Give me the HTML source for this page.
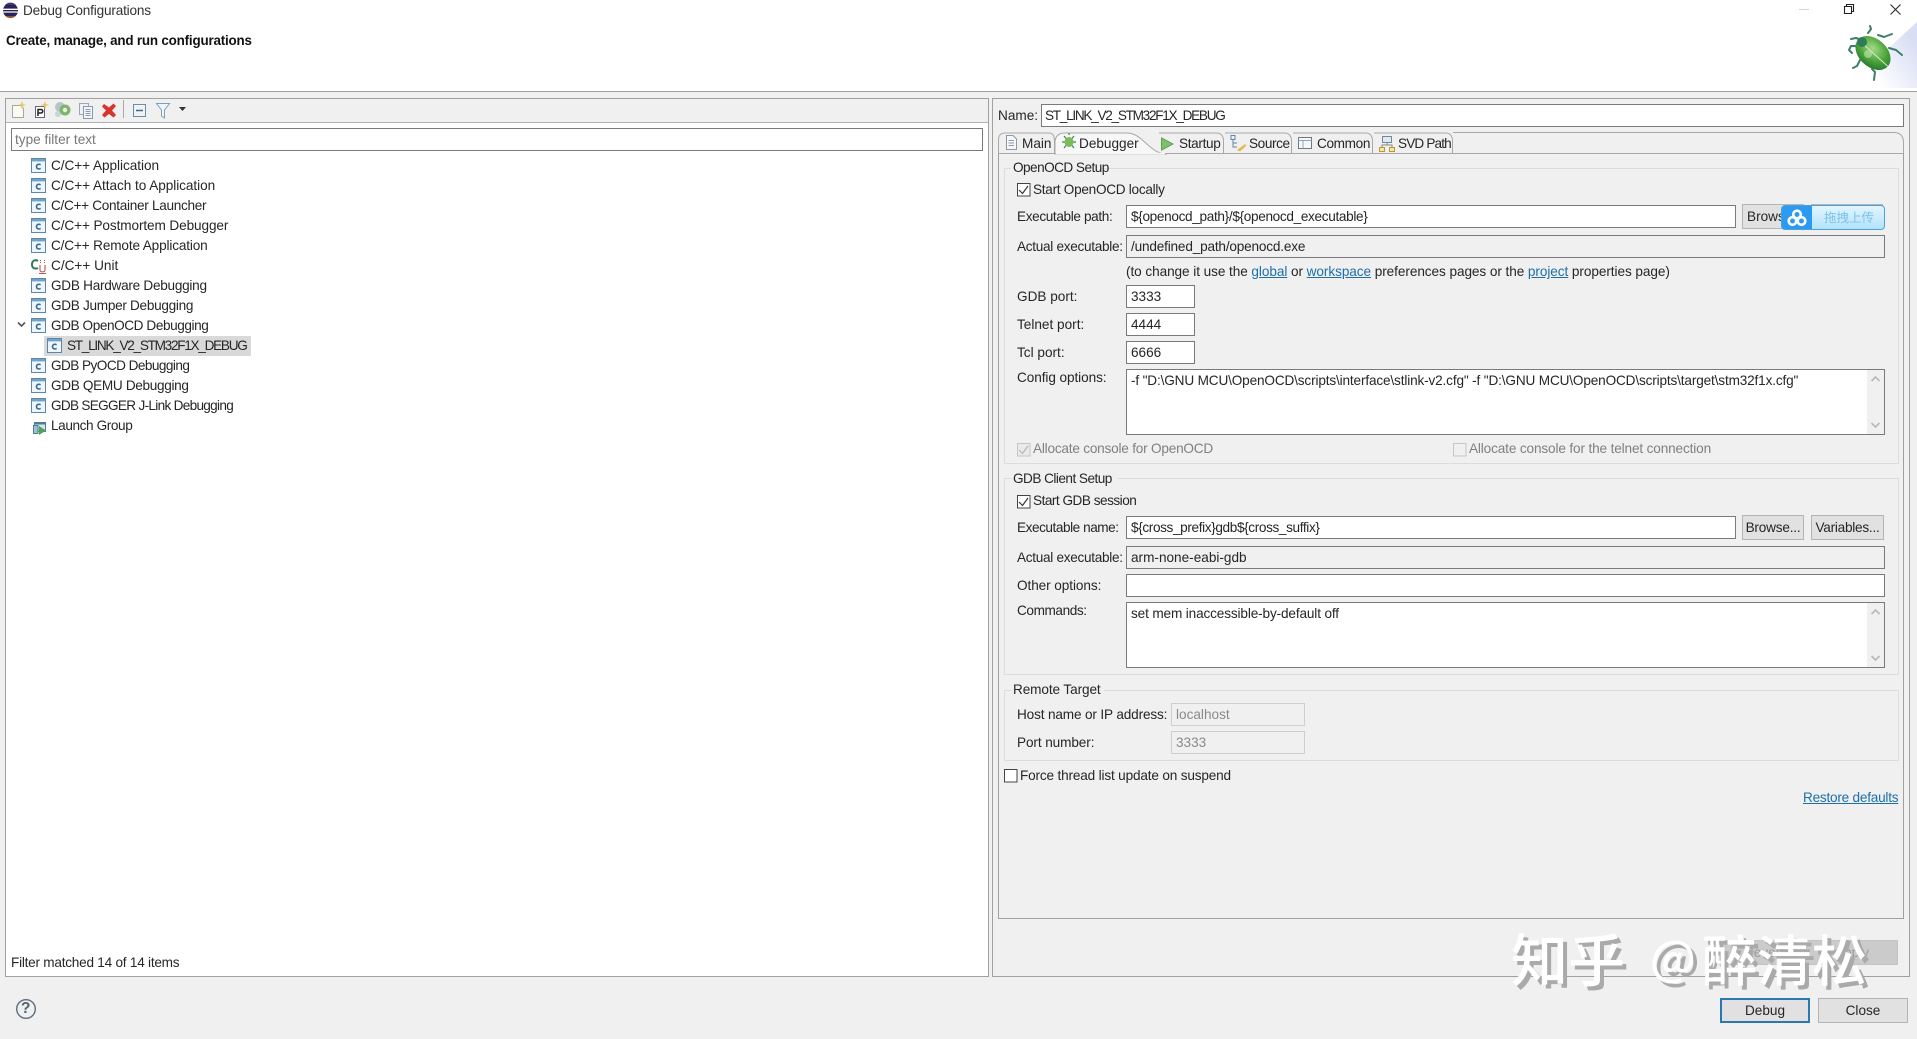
<!DOCTYPE html>
<html lang="en"><head><meta charset="utf-8"><title>Debug Configurations</title>
<style>
html,body{margin:0;padding:0;width:1917px;height:1039px;overflow:hidden;background:#f0f0f0}
body{position:relative;font:13.6px/20px "Liberation Sans","Noto Sans CJK SC",sans-serif;color:#262626}
.t{position:absolute;height:20px;line-height:20px;white-space:nowrap}
.b{position:absolute;box-sizing:border-box}
.i{position:absolute;box-sizing:border-box;border:1px solid #7a7a7a;background:#fff;padding-left:4px;padding-top:1px;line-height:20px;white-space:nowrap;overflow:hidden;height:23px}
.ro{background:#f0f0f0}
.dis{border-color:#cfcfcf;background:#f0f0f0;color:#8a8a8a}
.btn{position:absolute;box-sizing:border-box;border:1px solid #b4b4b4;background:#e1e1e1;text-align:center;line-height:23px;height:25px}
.g{color:#808080}
a{color:#1c6fa8;text-decoration:underline}
svg{position:absolute;left:0;top:0}
.w{font-family:'Noto Sans CJK SC',sans-serif;font-weight:500;color:#fff;text-shadow:4px 4px 0 #aaa;height:62px;line-height:62px}
</style></head><body>
<div class="b" style="left:0;top:0;width:1917px;height:92px;background:#fff;border-bottom:1px solid #a0a0a0"></div>
<div class="b" style="left:5px;top:98px;width:984px;height:879px;border:1px solid #a0a0a0;background:#fff"></div>
<div class="b" style="left:6px;top:99px;width:982px;height:24px;background:#f0f0f0;border-bottom:1px solid #b0b0b0"></div>
<div class="b" style="left:992px;top:98px;width:918px;height:879px;border:1px solid #a0a0a0"></div>
<div class="b" style="left:998px;top:153px;width:906px;height:766px;border:1px solid #a0a0a0;border-top:1px solid #a8a8a8"></div>
<div class="b" style="left:44px;top:336px;width:207px;height:20px;background:#d9d9d9"></div>

<svg width="1917" height="1039" viewBox="0 0 1917 1039">
<defs>
<linearGradient id="cg" x1="0" y1="1" x2="1" y2="0.35"><stop offset=".35" stop-color="#fff"/><stop offset="1" stop-color="#d8def4"/></linearGradient>
<radialGradient id="bg" cx=".42" cy=".38" r=".7"><stop offset="0" stop-color="#a5d98a"/><stop offset=".55" stop-color="#4ea63c"/><stop offset="1" stop-color="#23702c"/></radialGradient>
<symbol id="c" viewBox="0 0 15 15" overflow="visible">
<rect x=".5" y=".5" width="14" height="14" fill="#eef5fb" stroke="#5f87a3"/>
<rect x="1" y="1" width="13" height="2.4" fill="#6fa4c8"/>
<path d="M9.6 6.8C8.2 5.7 5.5 6.2 5.5 8.6S8.2 11.5 9.6 10.4" fill="none" stroke="#2f6a92" stroke-width="1.5"/>
</symbol>
<symbol id="box" viewBox="0 0 14 14"><rect x=".5" y=".5" width="12.5" height="12.5" fill="#fff" stroke="#444"/></symbol>
</defs>
<path d="M1917 22V88H1845Z" fill="url(#cg)"/>
<circle cx="10.5" cy="10.5" r="7.5" fill="#2c2255"/>
<path d="M3 8.6H18V10H3ZM3 11.4H18V12.6H3Z" fill="#fff"/>
<path d="M5 5A7.5 7.5 0 0 1 16 5Z" fill="#3f3578"/><path d="M5 16A7.5 7.5 0 0 0 16 16Z" fill="#e08a2e" opacity=".5"/>
<path d="M1799 9.5H1809" stroke="#d4d4d4"/>
<path d="M1844.5 6.5H1851.5V13.5H1844.5ZM1846.5 6.5V4.5H1853.5V11.5H1851.5" fill="none" stroke="#222" stroke-width="1.1"/>
<path d="M1890.5 4.5L1900.5 14.5M1900.5 4.5L1890.5 14.5" stroke="#222" stroke-width="1"/>
<!-- beetle -->
<g fill="none" stroke="#3f7f6a" stroke-width="2" stroke-linecap="round" stroke-linejoin="round">
<path d="M1862 40L1856 38L1851 39"/><path d="M1858 46L1851 46L1849 50L1852 53"/><path d="M1860 60L1857 66L1853 68"/>
<path d="M1868 33L1871 29L1870 26"/><path d="M1878 35L1884 37L1892 34"/><path d="M1889 48L1896 50L1902 55"/>
<path d="M1872 69L1875 72L1874 80"/><path d="M1882 66L1887 62"/>
</g>
<g transform="rotate(42 1873 53)"><ellipse cx="1873" cy="53" rx="20" ry="14" fill="url(#bg)"/><path d="M1860 53H1893" stroke="#d4efc4" stroke-width="1"/></g>
<circle cx="1868" cy="54" r="4" fill="#bfe6aa" opacity=".6"/>
<circle cx="1862" cy="42" r="5" fill="#2f7d58"/>
<!-- toolbar icons -->
<g transform="translate(-1,-1)">
<path d="M13.5 106.5H21.5L24.5 109.5V118.5H13.5Z" fill="#fbfbf3" stroke="#a8a8a0"/>
<path d="M23 102L24 105L27 106L24 107L23 110L22 107L19 106L22 105Z" fill="#e8c958"/>
<path d="M36.5 107.5H45.5V118.5H36.5Z" fill="#fff" stroke="#667"/>
<path d="M46 102L47 105L50 106L47 107L46 110L45 107L42 106L45 105Z" fill="#e8c958"/>
<path d="M39 117V110.5H42A1.7 1.7 0 0 1 42 114H39" fill="none" stroke="#222" stroke-width="1.5"/>
<circle cx="61" cy="108" r="5" fill="#b7c3cc"/><circle cx="59" cy="115" r="3" fill="#c8d2da"/>
<circle cx="66" cy="111" r="5.5" fill="#7eb56b"/><circle cx="66" cy="111" r="2.2" fill="#e8f4e0"/>
<path d="M80.5 104.5H89.5V115.5H80.5Z" fill="#eef2f6" stroke="#9aa8b4"/><path d="M84.5 107.5H93.5V119.5H84.5Z" fill="#f2f6fa" stroke="#8a9aa8"/>
<path d="M86.5 110.5H91.5M86.5 112.5H91.5M86.5 114.5H91.5M86.5 116.5H91.5" stroke="#8a9aa8"/>
<path d="M105 105L110 108.5L114.5 104.5L117 107L113 111.5L117 116L114.5 118.5L110 115L105.5 118.5L103 116L107 111.5L103 107.5Z" fill="#d8332f"/>
<path d="M124.5 101V119" stroke="#aaa"/>
<path d="M134.5 105.5H146.5V117.5H134.5Z" fill="#eef3f8" stroke="#6f8ca0"/><path d="M137 111.5H144" stroke="#3d6a8e" stroke-width="1.5"/>
<path d="M157.5 104.5H170.5L165.5 111V119L162.5 117V111Z" fill="#eef5fb" stroke="#7fa0ba"/>
<path d="M180 108H187L183.5 112Z" fill="#333"/>
</g>
<path d="M18 322.5L21.5 326L25 322.5" fill="none" stroke="#555" stroke-width="1.6"/>
<!-- tree icons -->
<use href="#c" x="31" y="158" width="15" height="15"/><use href="#c" x="31" y="178" width="15" height="15"/>
<use href="#c" x="31" y="198" width="15" height="15"/><use href="#c" x="31" y="218" width="15" height="15"/>
<use href="#c" x="31" y="238" width="15" height="15"/><use href="#c" x="31" y="278" width="15" height="15"/>
<use href="#c" x="31" y="298" width="15" height="15"/><use href="#c" x="31" y="318" width="15" height="15"/>
<use href="#c" x="47" y="338" width="15" height="15"/>
<use href="#c" x="31" y="358" width="15" height="15"/><use href="#c" x="31" y="378" width="15" height="15"/>
<use href="#c" x="31" y="398" width="15" height="15"/>
<path d="M38 261C36 259.500 32 260 32 264.500S36 269 38 268" fill="none" stroke="#2f7a5a" stroke-width="2"/>
<path d="M40 265V270C40 272.500 45 272.500 45 270V265M39 273.500H46M40 260.500H41M44 260.500H45M40 262.500H41M44 262.500H45" fill="none" stroke="#b9564a" stroke-width="1.1"/>
<rect x="34.500" y="422.500" width="11" height="9" fill="#d8e6ee" stroke="#4b7f99"/><rect x="34" y="422" width="12" height="2.5" fill="#4b7f99"/>
<path d="M33.500 425.500H38V433.500H33.500Z" fill="#9fc0d0" stroke="#4b7f99"/>
<path d="M39 426L46 430.500L39 435Z" fill="#4fa35b"/>
<!-- help -->
<circle cx="26" cy="1009" r="9.300" fill="none" stroke="#5d6f7d" stroke-width="1.400"/>
<!-- tabs -->
<g transform="translate(-1,0)">
<g fill="none" stroke="#a8a8a8">
<path d="M999.500 153V140C999.500 135 1002 133 1006 133H1050C1054 133 1055.500 136 1055.500 141V153"/>
<path d="M1217 133C1222 133 1224.500 136 1224.500 141V153"/>
<path d="M1226 133H1286C1290 133 1292.500 136 1292.500 141V153"/>
<path d="M1294 133H1367C1371 133 1373.500 136 1373.500 141V153"/>
<path d="M1375 133H1447C1451 133 1453.500 136 1453.500 141V153"/>
<path d="M1160 133H1217"/>
<path d="M1454 132.500H1895C1901 132.500 1904.500 136 1904.500 142V154"/>
</g>
<path d="M1056 154V143C1056 136 1060 133 1066 133H1128C1144 133 1150 154 1168 154Z" fill="#f7f7f7" stroke="#a8a8a8"/>
<path d="M1057 153.500H1166" stroke="#f7f7f7" stroke-width="1.500"/>
</g>
<!-- tab icons -->
<path d="M1006.500 135.500H1013L1016.500 139V149.500H1006.500Z" fill="#f5f7fa" stroke="#8d9aa6"/><path d="M1008.500 140.500H1014M1008.500 143H1014M1008.500 145.500H1014" stroke="#8d9aa6"/>
<g stroke="#3b7f5a" fill="none" stroke-width="1.200"><path d="M1064 136L1074 148M1074 136L1064 148M1062 142H1076M1069 133V135"/></g><ellipse cx="1069" cy="142" rx="4.500" ry="5" fill="#7dbb58"/>
<path d="M1161.500 138L1173 144L1161.500 150Z" fill="#7fc06e" stroke="#5da555"/>
<path d="M1231 135.500H1235V139.500H1231ZM1233 139.500V147H1237M1233 143H1237" fill="none" stroke="#5f86a6"/><path d="M1237 150L1245 144L1246.500 145.500L1240 151.500Z" fill="#e6b94f"/>
<rect x="1298.500" y="137.500" width="13" height="11" fill="#f5f8fb" stroke="#777"/><path d="M1298.500 140.500H1311.500M1303 140.500V148.500" stroke="#8fa7ba"/>
<path d="M1382.500 136.500H1391.500V142.500H1382.500Z" fill="#dfe9f2" stroke="#6e8aa2"/><path d="M1387 142.500V145M1382 147V145H1392V147" fill="none" stroke="#888"/><path d="M1379.500 147.500H1384.500V151.500H1379.500ZM1389.500 147.500H1394.500V151.500H1389.500Z" fill="#f4e5a8" stroke="#b79a33"/>
<!-- group boxes -->
<g fill="none" stroke="#dcdcdc">
<path d="M1011 168.500H1004.500V463.500H1898.500V168.500H1100"/>
<path d="M1011 478.500H1004.500V674.500H1898.500V478.500H1118"/>
<path d="M1011 690.500H1004.500V760.500H1898.500V690.500H1104"/>
</g>
<!-- checkboxes -->
<use href="#box" x="1017" y="183" width="14" height="14"/><path d="M1019 190L1022.500 193.500L1028 186" fill="none" stroke="#333" stroke-width="1.200"/>
<rect x="1017.500" y="443.500" width="12.500" height="12.500" fill="#eaeaea" stroke="#c6c6c6"/><path d="M1019 450L1022.500 453.500L1028 446" fill="none" stroke="#b6b6b6" stroke-width="1.200"/>
<rect x="1453.500" y="443.500" width="12.500" height="12.500" fill="#f0f0f0" stroke="#c6c6c6"/>
<use href="#box" x="1017" y="495" width="14" height="14"/><path d="M1019 502L1022.500 505.500L1028 498" fill="none" stroke="#333" stroke-width="1.200"/>
<use href="#box" x="1004" y="769" width="14" height="14"/>
</svg>

<!-- header text -->
<div class="t" style="left:23px;top:1px;color:#333;letter-spacing:-.18px">Debug Configurations</div>
<div class="t" style="left:6px;top:31px;font-weight:bold;color:#111;font-size:13.4px;letter-spacing:-.19px">Create, manage, and run configurations</div>

<!-- filter -->
<div class="i" style="left:11px;top:128px;width:972px;padding-left:3px;color:#777">type filter text</div>

<!-- tree -->
<div class="t" style="left:51px;top:156px;letter-spacing:-.05px">C/C++ Application</div>
<div class="t" style="left:51px;top:176px;letter-spacing:-.05px">C/C++ Attach to Application</div>
<div class="t" style="left:51px;top:196px;letter-spacing:-.3px">C/C++ Container Launcher</div>
<div class="t" style="left:51px;top:216px;letter-spacing:-.1px">C/C++ Postmortem Debugger</div>
<div class="t" style="left:51px;top:236px;letter-spacing:-.15px">C/C++ Remote Application</div>
<div class="t" style="left:51px;top:256px">C/C++ Unit</div>
<div class="t" style="left:51px;top:276px;letter-spacing:-.27px">GDB Hardware Debugging</div>
<div class="t" style="left:51px;top:296px;letter-spacing:-.3px">GDB Jumper Debugging</div>
<div class="t" style="left:51px;top:316px;letter-spacing:-.42px">GDB OpenOCD Debugging</div>
<div class="t" style="left:67px;top:336px;letter-spacing:-1.28px">ST_LINK_V2_STM32F1X_DEBUG</div>
<div class="t" style="left:51px;top:356px;letter-spacing:-.55px">GDB PyOCD Debugging</div>
<div class="t" style="left:51px;top:376px;letter-spacing:-.33px">GDB QEMU Debugging</div>
<div class="t" style="left:51px;top:396px;letter-spacing:-.7px">GDB SEGGER J-Link Debugging</div>
<div class="t" style="left:51px;top:416px;letter-spacing:-.4px">Launch Group</div>
<div class="t" style="left:11px;top:953px;letter-spacing:-.24px">Filter matched 14 of 14 items</div>
<div class="t" style="left:21px;top:999px;font-size:15.500px;font-weight:bold;color:#4f6272">?</div>

<!-- name -->
<div class="t" style="left:998px;top:106px">Name:</div>
<div class="i" style="left:1041px;top:104px;width:863px;padding-left:3px;letter-spacing:-1.28px">ST_LINK_V2_STM32F1X_DEBUG</div>

<!-- tabs -->
<div class="t" style="left:1022px;top:134px">Main</div>
<div class="t" style="left:1079px;top:134px">Debugger</div>
<div class="t" style="left:1179px;top:134px;letter-spacing:-.34px">Startup</div>
<div class="t" style="left:1249px;top:134px;letter-spacing:-.4px">Source</div>
<div class="t" style="left:1317px;top:134px;letter-spacing:-.35px">Common</div>
<div class="t" style="left:1398px;top:134px;letter-spacing:-.85px">SVD Path</div>

<!-- OpenOCD -->
<div class="t" style="left:1013px;top:158px;letter-spacing:-.54px">OpenOCD Setup</div>
<div class="t" style="left:1033px;top:180px;letter-spacing:-.28px">Start OpenOCD locally</div>
<div class="t" style="left:1017px;top:207px;letter-spacing:-.37px">Executable path:</div>
<div class="i" style="left:1126px;top:205px;width:610px;letter-spacing:-.33px">${openocd_path}/${openocd_executable}</div>
<div class="btn" style="left:1742px;top:204px;width:62px;text-align:left;padding-left:4px">Browse...</div>
<div class="btn" style="left:1811px;top:204px;width:72px">Variables...</div>
<div class="b" style="left:1781px;top:205px;width:104px;height:25px;border:1px solid #4f9fd8;border-radius:4px;background:linear-gradient(#e2f5ff,#b3e3fb);overflow:hidden">
<div class="b" style="left:0;top:0;width:30px;height:25px;background:#2a9af3"></div>
<svg width="30" height="25" viewBox="0 0 30 25"><g fill="none" stroke="#fff" stroke-width="2.600"><circle cx="15" cy="8.500" r="3.800"/><circle cx="10.500" cy="15" r="3.800"/><circle cx="19.500" cy="15" r="3.800"/></g></svg>
<div class="t" style="left:42px;top:2px;font-size:12.500px;color:#7cc2e8">拖拽上传</div></div>
<div class="t" style="left:1017px;top:237px;letter-spacing:-.3px">Actual executable:</div>
<div class="i ro" style="left:1126px;top:235px;width:759px;letter-spacing:-.18px">/undefined_path/openocd.exe</div>
<div class="t" style="left:1126px;top:262px;letter-spacing:-.07px">(to change it use the <a>global</a> or <a>workspace</a> preferences pages or the <a>project</a> properties page)</div>
<div class="t" style="left:1017px;top:287px">GDB port:</div>
<div class="i" style="left:1126px;top:285px;width:69px">3333</div>
<div class="t" style="left:1017px;top:315px">Telnet port:</div>
<div class="i" style="left:1126px;top:313px;width:69px">4444</div>
<div class="t" style="left:1017px;top:343px">Tcl port:</div>
<div class="i" style="left:1126px;top:341px;width:69px">6666</div>
<div class="t" style="left:1017px;top:368px;letter-spacing:-.08px">Config options:</div>
<div class="i" style="left:1126px;top:369px;width:759px;height:66px;padding-top:1px;letter-spacing:-.15px">-f "D:\GNU MCU\OpenOCD\scripts\interface\stlink-v2.cfg" -f "D:\GNU MCU\OpenOCD\scripts\target\stm32f1x.cfg"</div>
<div class="b" style="left:1867px;top:370px;width:17px;height:64px;background:#f0f0f0"></div>
<svg style="left:1867px;top:370px" width="17" height="64" viewBox="0 0 17 64"><path d="M4.500 11L8.500 7L12.500 11M4.500 53L8.500 57L12.500 53" fill="none" stroke="#b8b8b8" stroke-width="1.600"/></svg>
<div class="t g" style="left:1033px;top:439px;letter-spacing:-.21px">Allocate console for OpenOCD</div>
<div class="t g" style="left:1469px;top:439px;letter-spacing:-.14px">Allocate console for the telnet connection</div>

<!-- GDB -->
<div class="t" style="left:1013px;top:469px;letter-spacing:-.53px">GDB Client Setup</div>
<div class="t" style="left:1033px;top:491px;letter-spacing:-.5px">Start GDB session</div>
<div class="t" style="left:1017px;top:518px;letter-spacing:-.45px">Executable name:</div>
<div class="i" style="left:1126px;top:516px;width:610px;letter-spacing:-.37px">${cross_prefix}gdb${cross_suffix}</div>
<div class="btn" style="left:1742px;top:515px;width:62px;letter-spacing:-.2px">Browse...</div>
<div class="btn" style="left:1811px;top:515px;width:73px;letter-spacing:-.25px">Variables...</div>
<div class="t" style="left:1017px;top:548px;letter-spacing:-.3px">Actual executable:</div>
<div class="i ro" style="left:1126px;top:546px;width:759px">arm-none-eabi-gdb</div>
<div class="t" style="left:1017px;top:576px;letter-spacing:-.08px">Other options:</div>
<div class="i" style="left:1126px;top:574px;width:759px"></div>
<div class="t" style="left:1017px;top:601px;letter-spacing:-.4px">Commands:</div>
<div class="i" style="left:1126px;top:602px;width:759px;height:66px;padding-top:1px;letter-spacing:-.14px">set mem inaccessible-by-default off</div>
<div class="b" style="left:1867px;top:603px;width:17px;height:64px;background:#f0f0f0"></div>
<svg style="left:1867px;top:603px" width="17" height="64" viewBox="0 0 17 64"><path d="M4.500 11L8.500 7L12.500 11M4.500 53L8.500 57L12.500 53" fill="none" stroke="#b8b8b8" stroke-width="1.600"/></svg>

<!-- Remote -->
<div class="t" style="left:1013px;top:680px;letter-spacing:-.1px">Remote Target</div>
<div class="t" style="left:1017px;top:705px;letter-spacing:-.15px">Host name or IP address:</div>
<div class="i dis" style="left:1171px;top:703px;width:134px">localhost</div>
<div class="t" style="left:1017px;top:733px;letter-spacing:-.1px">Port number:</div>
<div class="i dis" style="left:1171px;top:731px;width:134px">3333</div>

<div class="t" style="left:1020px;top:766px;letter-spacing:-.17px">Force thread list update on suspend</div>
<div class="t" style="left:1803px;top:788px;letter-spacing:-.23px"><a>Restore defaults</a></div>

<!-- Revert / Apply -->
<div class="btn" style="left:1722px;top:940px;width:84px;background:#cbcbcb;border-color:#c4c4c4;color:#9a9a9a">Revert</div>
<div class="btn" style="left:1806px;top:940px;width:92px;background:#cbcbcb;border-color:#c4c4c4;color:#9a9a9a">Apply</div>

<!-- watermark -->
<div class="t w" style="left:1511px;top:926px;font-size:57px">知乎</div>
<div class="t w" style="left:1650px;top:924px;font-size:47px">@</div>
<div class="t w" style="left:1702px;top:926px;font-size:55px">醉清松</div>

<!-- bottom buttons -->
<div class="btn" style="left:1720px;top:998px;width:90px;border:2px solid #2a78b0;line-height:21px">Debug</div>
<div class="btn" style="left:1818px;top:998px;width:90px">Close</div>
</body></html>
